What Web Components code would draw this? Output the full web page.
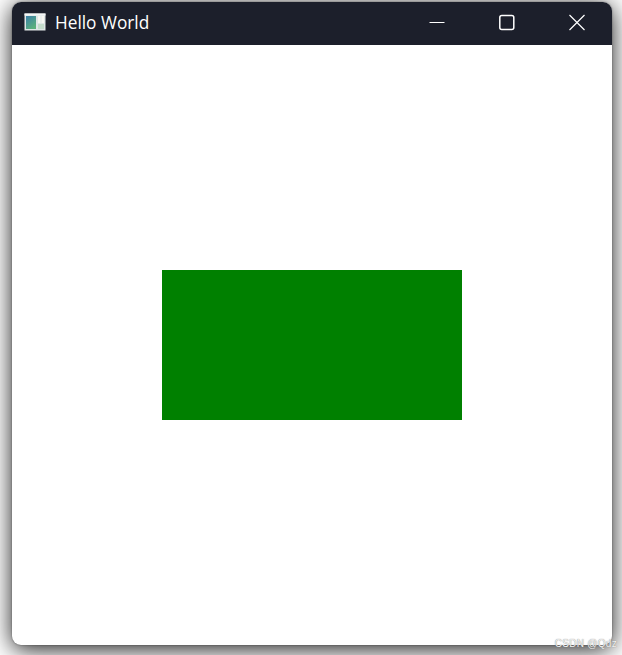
<!DOCTYPE html>
<html>
<head>
<meta charset="utf-8">
<title>Hello World</title>
<style>
  html, body { margin: 0; height: 100%; background: #fff; overflow: hidden; }
  body { font-family: "Open Sans", "Noto Sans", sans-serif; }
</style>
</head>
<body>
<desktop-frame>
  <app-window window-title="Hello World">
    <green-rect></green-rect>
  </app-window>
</desktop-frame>

<script>
class DesktopFrame extends HTMLElement {
  constructor() {
    super();
    this.attachShadow({ mode: 'open' });
  }

  connectedCallback() {
    this.shadowRoot.innerHTML = `
      <style>
        :host {
          display: block;
          position: relative;
          width: 622px;
          height: 655px;
          box-sizing: border-box;
          padding: 2px 10px 10px 12px;
          overflow: hidden;
        }
        .mark {
          position: absolute;
          right: 5px;
          bottom: 6px;
          font: 10px "Liberation Sans", sans-serif;
          letter-spacing: 0.3px;
          color: #f2f2f2;
          text-shadow: 0 0 1px #666;
        }
      </style>
      <slot></slot>
      <div class="mark">CSDN @Qdz</div>
    `;
  }
}

class AppWindow extends HTMLElement {
  constructor() {
    super();
    this.attachShadow({ mode: 'open' });
  }

  connectedCallback() {
    const title = this.getAttribute('window-title');
    this.shadowRoot.innerHTML = `
      <style>
        :host {
          display: flex;
          flex-direction: column;
          height: 643px;
          border-radius: 9px;
          overflow: hidden;
          background: #fff;
          box-shadow: 0 4px 24px rgba(0, 0, 0, 0.9), 0 0 2px rgba(0, 0, 0, 0.4);
        }
        .bar {
          display: flex;
          align-items: center;
          flex: 0 0 43px;
          background: #1c1f2b;
          color: #fff;
          padding-left: 12px;
        }
        .icon { width: 22px; height: 18px; margin-right: 9px; margin-top: -4px; display: block; }
        .title { flex: 1; font-size: 17.25px; margin-top: -3px; }
        .btn { width: 70px; display: flex; justify-content: center; }
        .btn svg { display: block; width: 20px; height: 20px; margin-top: -3px; }
        .btns { display: flex; }
        .content {
          flex: 1;
          display: flex;
          align-items: center;
          justify-content: center;
        }
      </style>
      <div class="bar">
        <svg class="icon" viewBox="0 0 22 18">
          <defs>
            <linearGradient id="g" x1="0" y1="0" x2="0.6" y2="1">
              <stop offset="0" stop-color="#3a7ea8"/>
              <stop offset="1" stop-color="#5bb07c"/>
            </linearGradient>
          </defs>
          <rect x="0.5" y="0.5" width="21" height="17" fill="#dfe6e6"/>
          <rect x="0.5" y="0.5" width="21" height="2" fill="#f4f6f6"/>
          <rect x="2" y="3" width="10" height="13" fill="url(#g)"/>
          <rect x="14" y="3" width="2.5" height="7" fill="#f7f7f2"/>
          <rect x="17.5" y="3" width="2.5" height="7" fill="#f7f7f2"/>
          <rect x="14" y="11" width="6" height="5" fill="#c4dccb"/>
        </svg>
        <div class="title">${title}</div>
        <div class="btns">
          <div class="btn">
            <svg viewBox="0 0 20 20"><path d="M2.5 10.5h15" stroke="#fff" stroke-width="1" fill="none"/></svg>
          </div>
          <div class="btn">
            <svg viewBox="0 0 20 20"><rect x="2.8" y="3.6" width="14" height="14" rx="2" stroke="#fff" stroke-width="1.5" fill="none"/></svg>
          </div>
          <div class="btn">
            <svg viewBox="0 0 20 20"><path d="M2.5 3l15 15M17.5 3l-15 15" stroke="#fff" stroke-width="1.2" fill="none"/></svg>
          </div>
        </div>
      </div>
      <div class="content"><slot></slot></div>
    `;
  }
}

class GreenRect extends HTMLElement {
  constructor() {
    super();
    this.attachShadow({ mode: 'open' });
    this.shadowRoot.innerHTML = `
      <style>
        :host { display: block; width: 300px; height: 150px; background: #008000; }
      </style>
    `;
  }
}

customElements.define('desktop-frame', DesktopFrame);
customElements.define('app-window', AppWindow);
customElements.define('green-rect', GreenRect);
</script>
</body>
</html>
